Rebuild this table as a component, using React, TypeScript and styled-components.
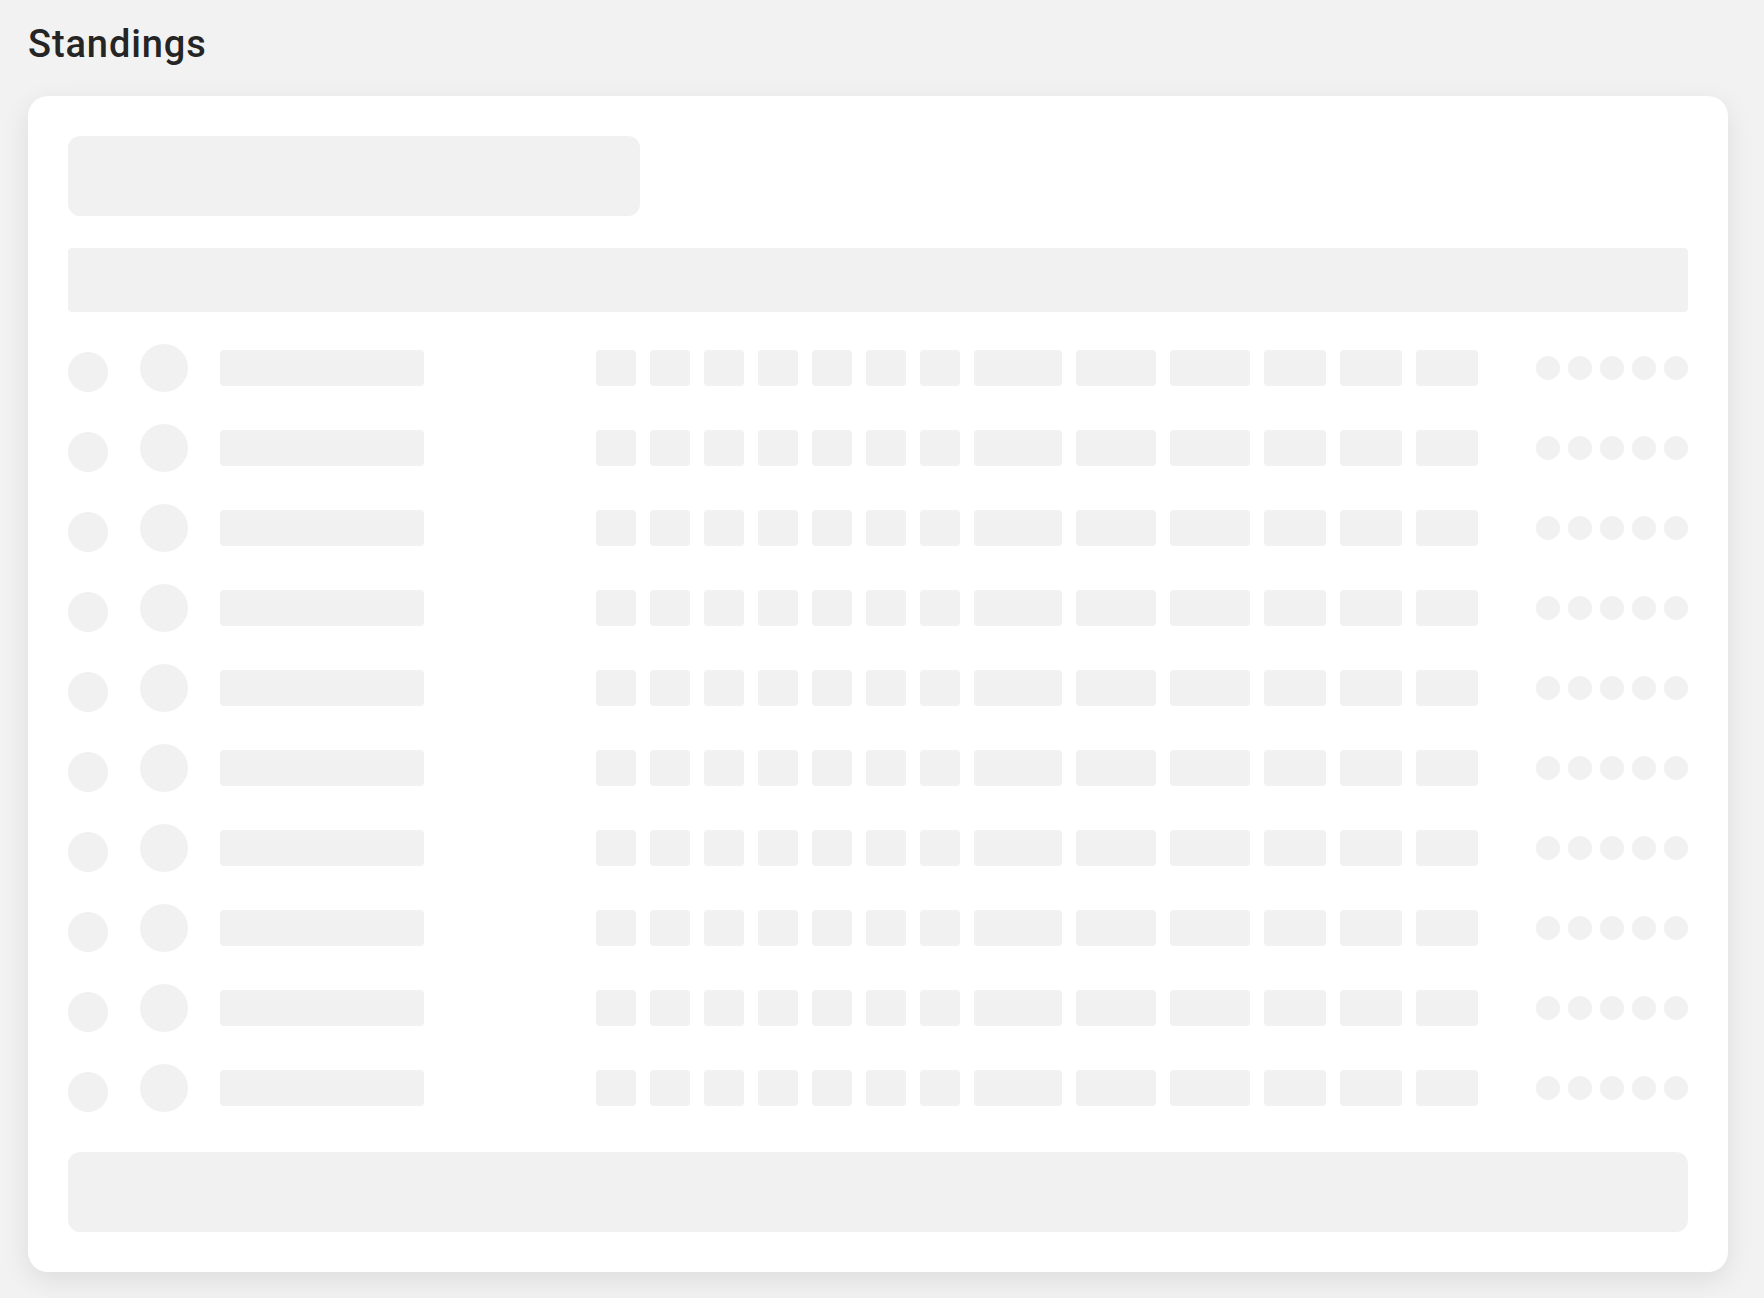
import React from "react";
import styled, { createGlobalStyle } from "styled-components";

const GlobalStyle = createGlobalStyle`
  html, body {
    margin: 0;
    padding: 0;
    background: #f2f2f2;
    font-family: Roboto, "Noto Sans", "Liberation Sans", sans-serif;
  }
  * { box-sizing: border-box; }
`;

const Page = styled.main`
  padding: 22px 36px 26px 28px;
`;

const Title = styled.h1`
  margin: 0 0 30px;
  font-family: Roboto, "Liberation Sans", sans-serif;
  font-size: 38px;
  line-height: 44px;
  font-weight: 500;
  letter-spacing: 0.9px;
  color: #252525;
`;

const Card = styled.section`
  background: #ffffff;
  border-radius: 20px;
  padding: 40px;
  box-shadow: 0 8px 28px rgba(0, 0, 0, 0.09);
  display: flex;
  flex-direction: column;
`;

const Skel = styled.div<{ $w?: number; $h: number; $r: number }>`
  background: #f1f1f1;
  width: ${(p) => (p.$w ? `${p.$w}px` : "100%")};
  height: ${(p) => p.$h}px;
  border-radius: ${(p) => p.$r}px;
  flex-shrink: 0;
`;

const SearchBar = styled(Skel)`
  margin-bottom: 32px;
`;

const HeaderBar = styled(Skel)`
  margin-bottom: 32px;
`;

const Rows = styled.div`
  display: flex;
  flex-direction: column;
  gap: 32px;
`;

const Row = styled.div`
  display: flex;
  align-items: center;
  height: 48px;
`;

const Circle = styled.div<{ $d: number }>`
  width: ${(p) => p.$d}px;
  height: ${(p) => p.$d}px;
  border-radius: 50%;
  background: #f1f1f1;
  flex-shrink: 0;
`;

const RankCircle = styled(Circle)`
  margin-top: 8px;
  margin-right: 32px;
`;

const LogoCircle = styled(Circle)`
  margin-right: 32px;
`;

const Cells = styled.div`
  display: flex;
  gap: 14px;
  margin-left: 172px;
`;

const Cell = styled.div<{ $w: number }>`
  width: ${(p) => p.$w}px;
  height: 36px;
  border-radius: 4px;
  background: #f1f1f1;
`;

const Form = styled.div`
  display: flex;
  gap: 8px;
  margin-left: auto;
`;

const FooterBar = styled(Skel)`
  margin-top: 40px;
`;

const cellWidths = [40, 40, 40, 40, 40, 40, 40, 88, 80, 80, 62, 62, 62];

export default function App() {
  return (
    <>
      <GlobalStyle />
      <Page>
        <Title>Standings</Title>
        <Card>
          <SearchBar $w={572} $h={80} $r={12} />
          <HeaderBar $h={64} $r={4} />
          <Rows>
            {Array.from({ length: 10 }).map((_, i) => (
              <Row key={i}>
                <RankCircle $d={40} />
                <LogoCircle $d={48} />
                <Skel $w={204} $h={36} $r={4} />
                <Cells>
                  {cellWidths.map((w, j) => (
                    <Cell key={j} $w={w} />
                  ))}
                </Cells>
                <Form>
                  {Array.from({ length: 5 }).map((_, k) => (
                    <Circle key={k} $d={24} />
                  ))}
                </Form>
              </Row>
            ))}
          </Rows>
          <FooterBar $h={80} $r={12} />
        </Card>
      </Page>
    </>
  );
}
